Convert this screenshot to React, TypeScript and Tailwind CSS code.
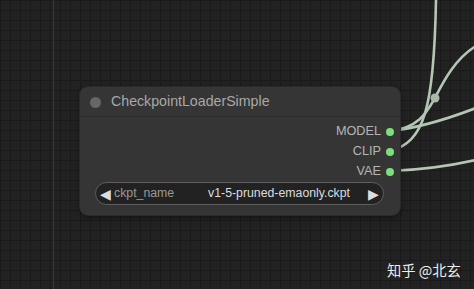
import React from 'react';

const outputs = ['MODEL', 'CLIP', 'VAE'];

export default function App() {
  return (
    <div
      className="relative w-[474px] h-[289px] overflow-hidden bg-[#222222] bg-[linear-gradient(#1a1a1a_1px,transparent_1px),linear-gradient(90deg,#1a1a1a_1px,transparent_1px)] bg-[size:10px_10px]"
      style={{ fontFamily: '"Liberation Sans", Arial, sans-serif' }}
    >
      {/* canvas guide line */}
      <div className="absolute left-[53px] top-0 h-full w-px bg-[#34344e]" />

      {/* links */}
      <svg className="absolute inset-0" width="474" height="289" viewBox="0 0 474 289">
        <g fill="none" stroke="#b4c6b4" strokeWidth="2.6" strokeLinecap="round">
          <path d="M 390 151 C 424 142, 434 110, 436 0" />
          <path d="M 390 131 C 420 128, 428 110, 435 98 C 444 80, 456 58, 476 46" />
          <path d="M 390 131 C 420 128, 450 118, 476 108" />
          <path d="M 390 171 C 420 170, 450 166, 476 160" />
        </g>
        <circle cx="435" cy="98" r="4.5" fill="#a9b9a9" />
      </svg>

      {/* node */}
      <div className="absolute left-[80px] top-[87px] w-[320px] h-[128px] rounded-lg bg-[#353535] shadow-[0_0_0_1px_#2a2a2a,0_2px_6px_rgba(0,0,0,0.5)]">
        <div className="flex items-center h-[30px] pl-[10px] pt-px border-b border-[#2d2d2d]">
          <span className="w-[11px] h-[11px] rounded-full bg-[#666666]" />
          <span className="ml-[10px] text-[14.2px] text-[#a8a8a8]">CheckpointLoaderSimple</span>
        </div>

        <div className="flex flex-col items-end pt-[5px] pr-[6px]">
          {outputs.map((name) => (
            <div key={name} className="flex items-center h-[20px] gap-[5px]">
              <span className="text-[12.7px] text-[#b5b5b5]">{name}</span>
              <span className="w-[8px] h-[8px] rounded-full bg-[#7be07b]" />
            </div>
          ))}
        </div>

        <div className="mx-[15px] mr-[16px] h-[23px] rounded-full border border-[#5e5e5e] bg-[#222222] flex items-center pl-[4px] pr-[4px] text-[12.3px]">
          <span className="text-[#dddddd] text-[14px] leading-none">◀</span>
          <span className="ml-[3px] text-[#999999]">ckpt_name</span>
          <span className="ml-auto mr-[18px] text-[#dddddd]">v1-5-pruned-emaonly.ckpt</span>
          <span className="text-[#dddddd] text-[14px] leading-none">▶</span>
        </div>
      </div>

      {/* watermark */}
      <div
        className="absolute left-[387px] top-[259px] text-[14.3px] text-[#ececec]"
        style={{ fontFamily: '"Noto Sans CJK SC", "Liberation Sans", sans-serif' }}
      >
        知乎 @北玄
      </div>
    </div>
  );
}
